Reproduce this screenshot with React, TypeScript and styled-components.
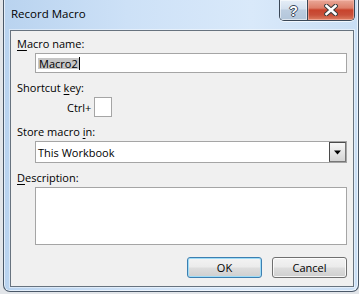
import React from "react";
import styled, { createGlobalStyle } from "styled-components";

const GlobalStyle = createGlobalStyle`
  html, body { margin: 0; padding: 0; }
  body {
    background: #e2e5e9;
    font-family: "Open Sans", "Noto Sans", sans-serif;
    font-size: 11px;
    color: #000;
  }
  * { box-sizing: border-box; }
`;

const Window = styled.div`
  margin-left: 3px;
  width: 356px;
  height: 292px;
  border: 1px solid #4a5868;
  border-top: none;
  border-radius: 0 0 7px 7px;
  background: linear-gradient(90deg, #b9d3ef 0%, #cde1f7 35%, #d9e9fa 70%, #c9def5 100%);
  box-shadow: inset 1px 0 0 rgba(255, 255, 255, 0.6), inset -1px -1px 0 rgba(255, 255, 255, 0.6);
  display: flex;
  flex-direction: column;
`;

const TitleBar = styled.div`
  height: 30px;
  flex: none;
  display: flex;
  align-items: flex-start;
  padding-left: 7px;
`;

const Title = styled.div`
  margin-top: 6px;
  font-size: 11.5px;
  line-height: 15px;
  color: #000;
`;

const TitleButtons = styled.div`
  margin-left: auto;
  margin-right: 3px;
  height: 21px;
  display: flex;
  border: 1px solid #3a4757;
  border-top: none;
  border-radius: 0 0 5px 5px;
  overflow: hidden;
  box-shadow: 0 1px 0 rgba(255, 255, 255, 0.7);
`;

const HelpButton = styled.div`
  width: 28px;
  border-right: 1px solid #3a4757;
  background: linear-gradient(180deg, #e6eef7 0%, #d3e0ee 45%, #bccde0 50%, #b3c6da 100%);
  box-shadow: inset 0 0 0 1px rgba(255, 255, 255, 0.55);
  display: flex;
  align-items: center;
  justify-content: center;
  font-family: "Liberation Sans", Arial, sans-serif;
  font-weight: bold;
  font-size: 14px;
  color: #ffffff;
  text-shadow: 1px 0 0 #3c4a5a, -1px 0 0 #3c4a5a, 0 1px 0 #3c4a5a, 0 -1px 0 #3c4a5a;
  padding-top: 1px;
`;

const CloseButton = styled.div`
  width: 46px;
  background: linear-gradient(180deg, #e9a898 0%, #dd7f6a 40%, #c8432c 50%, #c9503a 75%, #dc7f62 100%);
  box-shadow: inset 0 0 0 1px rgba(255, 200, 190, 0.5);
  display: flex;
  align-items: center;
  justify-content: center;
`;

const Client = styled.div`
  flex: 1;
  margin: 0 4px 4px 6px;
  border: 1px solid #67737f;
  background: #f0f0f0;
  box-shadow: 0 0 0 1px rgba(255, 255, 255, 0.45);
  padding: 5px 6px 8px 6px;
  display: flex;
  flex-direction: column;
`;

const Label = styled.div<{ $mt?: number }>`
  height: 15px;
  line-height: 15px;
  margin-top: ${(p) => p.$mt ?? 0}px;
  white-space: nowrap;
`;

const Key = styled.span`
  text-decoration: underline;
  text-underline-offset: 2px;
`;

const TextBox = styled.div<{ $h: number }>`
  margin: 2px 0 0 18px;
  height: ${(p) => p.$h}px;
  border: 1px solid #a5a5a5;
  background: #fff;
  display: flex;
  align-items: center;
  padding-left: 2px;
`;

const Selected = styled.span`
  background: #c6c6c6;
  line-height: 11px;
  padding: 0 1px 0 1px;
  height: 11px;
  display: inline-flex;
  align-items: center;
`;

const Caret = styled.span`
  width: 1px;
  height: 13px;
  background: #000;
`;

const CtrlRow = styled.div`
  margin-top: 2px;
  height: 20px;
  display: flex;
  align-items: center;
  padding-left: 50px;
  gap: 3px;
`;

const KeyBox = styled.div`
  width: 18px;
  height: 20px;
  border: 1px solid #a5a5a5;
  background: #fff;
`;

const Select = styled.div`
  margin: 2px 0 0 18px;
  height: 22px;
  border: 1px solid #a5a5a5;
  background: #fff;
  display: flex;
  align-items: stretch;
`;

const SelectText = styled.div`
  flex: 1;
  display: flex;
  align-items: center;
  padding-left: 2px;
`;

const DropButton = styled.div`
  width: 17px;
  border: 1px solid #4a4a4a;
  border-right-color: #777;
  border-bottom-color: #777;
  background: linear-gradient(180deg, #f7f7f7 0%, #e6e6e6 50%, #d4d4d4 100%);
  display: flex;
  align-items: center;
  justify-content: center;
`;

const ButtonRow = styled.div`
  margin-top: 12px;
  display: flex;
  justify-content: flex-end;
  gap: 10px;
`;

const Button = styled.div<{ $default?: boolean }>`
  width: 75px;
  height: 21px;
  border: 1px solid ${(p) => (p.$default ? "#3c7fb1" : "#707070")};
  border-radius: 3px;
  background: linear-gradient(180deg, #f3f3f3 0%, #ebebeb 48%, #dddddd 52%, #cfcfcf 100%);
  box-shadow: inset 0 0 0 1px ${(p) => (p.$default ? "#9fdcf7" : "rgba(255,255,255,0.8)")};
  display: flex;
  align-items: center;
  justify-content: center;
  line-height: 15px;
`;

export default function App() {
  return (
    <>
      <GlobalStyle />
      <Window>
        <TitleBar>
          <Title>Record Macro</Title>
          <TitleButtons>
            <HelpButton>?</HelpButton>
            <CloseButton>
              <svg width="14" height="12" viewBox="0 0 14 12">
                <path d="M2.5 2 L11.5 10 M11.5 2 L2.5 10" stroke="#3b3b3b" strokeWidth="4.6" strokeLinecap="square" fill="none" />
                <path d="M2.5 2 L11.5 10 M11.5 2 L2.5 10" stroke="#ffffff" strokeWidth="2.6" strokeLinecap="square" fill="none" />
              </svg>
            </CloseButton>
          </TitleButtons>
        </TitleBar>
        <Client>
          <Label>
            <Key>M</Key>acro name:
          </Label>
          <TextBox $h={20}>
            <Selected>Macro2</Selected>
            <Caret />
          </TextBox>
          <Label $mt={7}>
            Shortcut <Key>k</Key>ey:
          </Label>
          <CtrlRow>
            <span>Ctrl+</span>
            <KeyBox />
          </CtrlRow>
          <Label $mt={7}>
            Store macro <Key>i</Key>n:
          </Label>
          <Select>
            <SelectText>This Workbook</SelectText>
            <DropButton>
              <svg width="7" height="5" viewBox="0 0 7 5">
                <path d="M0 0.5 H7 L3.5 4.5 Z" fill="#000" />
              </svg>
            </DropButton>
          </Select>
          <Label $mt={7}>
            <Key>D</Key>escription:
          </Label>
          <TextBox $h={58} />
          <ButtonRow>
            <Button $default>OK</Button>
            <Button>Cancel</Button>
          </ButtonRow>
        </Client>
      </Window>
    </>
  );
}
